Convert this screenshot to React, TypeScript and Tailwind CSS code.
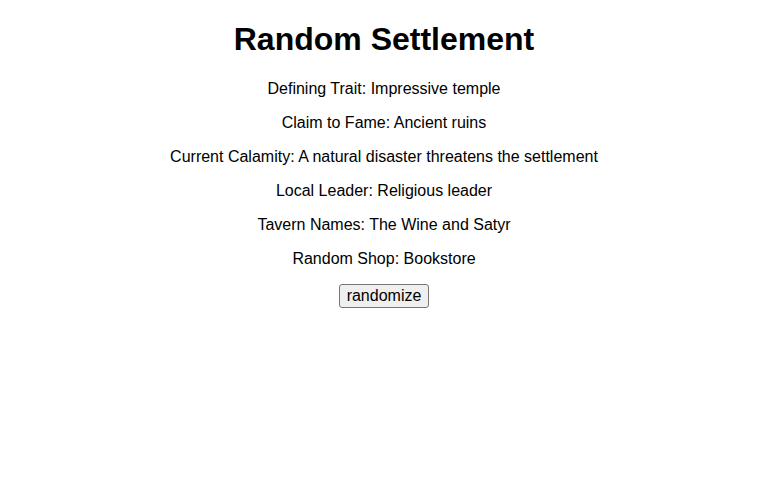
import React, { useState } from "react";

const traits = ["Impressive temple", "Bustling market", "Ancient walls", "Famous brewery"];
const fames = ["Ancient ruins", "Legendary hero", "Rare herbs", "Grand library"];
const calamities = [
  "A natural disaster threatens the settlement",
  "Bandits raid the roads",
  "A plague spreads among the people",
];
const leaders = ["Religious leader", "Elected mayor", "Hereditary noble", "Guild council"];
const taverns = ["The Wine and Satyr", "The Prancing Pony", "The Rusty Tankard"];
const shops = ["Bookstore", "Blacksmith", "Apothecary", "Tailor"];

const pick = (arr: string[]) => arr[Math.floor(Math.random() * arr.length)];

export default function App() {
  const [s, setS] = useState({
    trait: traits[0],
    fame: fames[0],
    calamity: calamities[0],
    leader: leaders[0],
    tavern: taverns[0],
    shop: shops[0],
  });

  const randomize = () =>
    setS({
      trait: pick(traits),
      fame: pick(fames),
      calamity: pick(calamities),
      leader: pick(leaders),
      tavern: pick(taverns),
      shop: pick(shops),
    });

  return (
    <div
      className="text-center text-black bg-white min-h-[480px] flow-root"
      style={{ fontFamily: '"Liberation Sans", Arial, sans-serif' }}
    >
      <h1 className="text-[32px] font-bold leading-[37px] mt-[21.44px] mb-[21.44px]">Random Settlement</h1>
      <p className="text-base leading-[18px] my-4">Defining Trait: {s.trait}</p>
      <p className="text-base leading-[18px] my-4">Claim to Fame: {s.fame}</p>
      <p className="text-base leading-[18px] my-4">Current Calamity: {s.calamity}</p>
      <p className="text-base leading-[18px] my-4">Local Leader: {s.leader}</p>
      <p className="text-base leading-[18px] my-4">Tavern Names: {s.tavern}</p>
      <p className="text-base leading-[18px] my-4">Random Shop: {s.shop}</p>
      <button
        onClick={randomize}
        className="text-base leading-[18px] px-[7px] py-[2px] border border-[#767676] rounded-[3px] bg-[#efefef] text-black"
      >
        randomize
      </button>
    </div>
  );
}
